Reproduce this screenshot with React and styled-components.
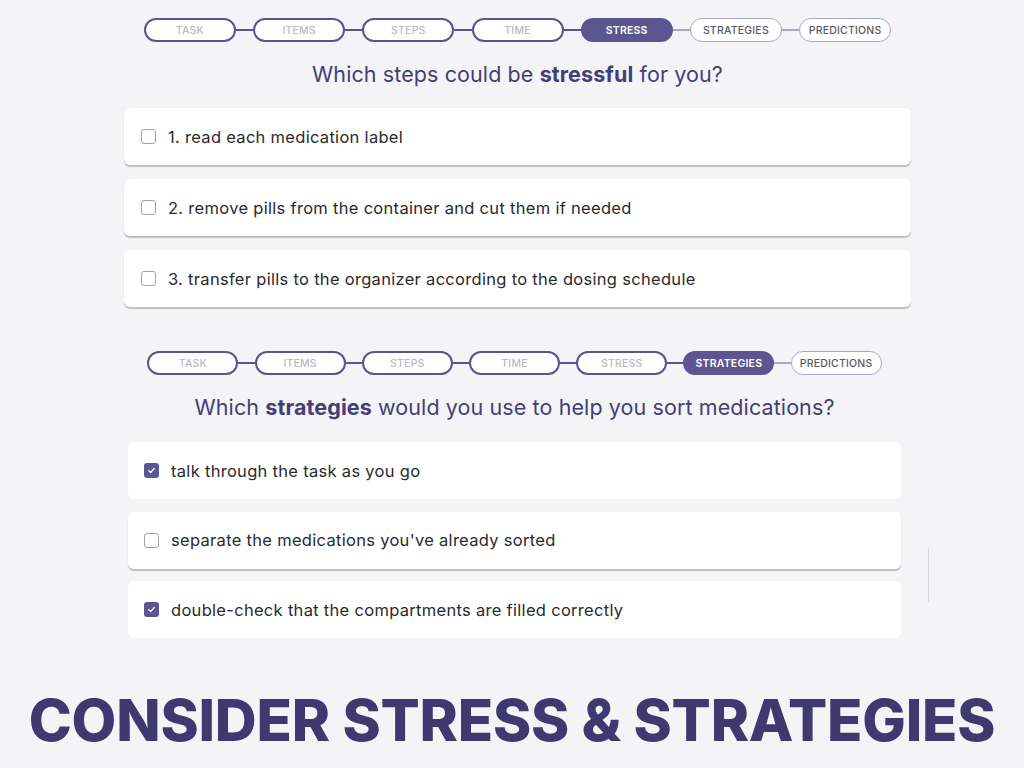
import React from "react";
import styled, { createGlobalStyle } from "styled-components";

const Global = createGlobalStyle`
  html, body { margin: 0; padding: 0; background: #f4f4f7; }
  body { font-family: Inter, "Noto Sans", sans-serif; }
`;

const Page = styled.div`
  position: relative;
  width: 1024px;
  height: 768px;
  background: #f4f4f7;
  overflow: hidden;
  display: flex;
  flex-direction: column;
`;

const Section = styled.section`
  width: ${(p) => p.$width}px;
  margin-left: ${(p) => p.$left}px;
  margin-top: ${(p) => p.$top}px;
  display: flex;
  flex-direction: column;
  align-items: center;
`;

const Stepper = styled.div`
  display: flex;
  align-items: center;
`;

const Pill = styled.div`
  box-sizing: border-box;
  width: ${(p) => p.$w}px;
  height: 24px;
  border-radius: 12px;
  display: flex;
  align-items: center;
  justify-content: center;
  font-size: 10.5px;
  font-weight: ${(p) => (p.$state === "active" ? 600 : 500)};
  letter-spacing: 0.2px;
  text-transform: uppercase;
  border: ${(p) =>
    p.$state === "active"
      ? "2px solid #5c558f"
      : p.$state === "done"
      ? "2px solid #5a5391"
      : "1.5px solid #aba6c9"};
  background: ${(p) => (p.$state === "active" ? "#5c558f" : "#ffffff")};
  color: ${(p) =>
    p.$state === "active" ? "#ffffff" : p.$state === "done" ? "#b9b9c2" : "#58585f"};
`;

const Connector = styled.div`
  width: ${(p) => p.$w}px;
  height: ${(p) => (p.$done ? 2 : 1.5)}px;
  background: ${(p) => (p.$done ? "#5a5391" : "#aba6c9")};
`;

const Heading = styled.h2`
  margin: ${(p) => p.$mt}px 0 0;
  font-size: 21.5px;
  line-height: 30px;
  font-weight: 400;
  letter-spacing: 0.1px;
  color: #443e76;
  strong { font-weight: 700; }
`;

const CardList = styled.div`
  align-self: stretch;
  display: flex;
  flex-direction: column;
  gap: ${(p) => p.$gap}px;
  margin-top: ${(p) => p.$mt}px;
`;

const Card = styled.div`
  height: ${(p) => p.$h}px;
  background: #ffffff;
  border-radius: 6px;
  box-shadow: ${(p) => (p.$shadow ? "0 1.5px 1px rgba(0,0,0,0.22)" : "none")};
  display: flex;
  align-items: center;
  padding-left: ${(p) => p.$pad}px;
  gap: 12px;
`;

const Box = styled.span`
  box-sizing: border-box;
  width: 15px;
  height: 15px;
  border-radius: 3px;
  border: ${(p) => (p.$checked ? "none" : "1.5px solid #a3a3a8")};
  background: ${(p) => (p.$checked ? "#5c558f" : "#ffffff")};
  display: flex;
  align-items: center;
  justify-content: center;
  flex-shrink: 0;
`;

const Label = styled.span`
  font-size: 16.5px;
  color: #2a2a2e;
  letter-spacing: 0.3px;
`;

const Title = styled.h1`
  margin: ${(p) => p.$mt}px 0 0;
  text-align: center;
  white-space: nowrap;
  font-family: Inter, "Noto Sans", sans-serif;
  font-weight: 800;
  font-size: 58px;
  line-height: 60px;
  letter-spacing: -0.2px;
  color: #3f396f;
`;

const Scrollbar = styled.div`
  position: absolute;
  left: 928px;
  top: 548px;
  width: 1px;
  height: 54px;
  background: #d6d6dc;
`;

const steps = ["Task", "Items", "Steps", "Time", "Stress", "Strategies", "Predictions"];

function Steps({ active, pillW, gapW }) {
  const items = [];
  steps.forEach((s, i) => {
    const state = i < active ? "done" : i === active ? "active" : "todo";
    if (i > 0) {
      items.push(<Connector key={"c" + i} $w={gapW} $done={i <= active} />);
    }
    items.push(
      <Pill key={s} $w={pillW} $state={state}>
        {s}
      </Pill>
    );
  });
  return <Stepper>{items}</Stepper>;
}

function Check({ checked }) {
  return (
    <Box $checked={checked}>
      {checked && (
        <svg width="9" height="9" viewBox="0 0 10 10">
          <path d="M2 5.2 L4.1 7.2 L8 2.8" fill="none" stroke="#fff" strokeWidth="1.4" strokeLinecap="round" strokeLinejoin="round" />
        </svg>
      )}
    </Box>
  );
}

const stressItems = [
  "1. read each medication label",
  "2. remove pills from the container and cut them if needed",
  "3. transfer pills to the organizer according to the dosing schedule",
];

const strategyItems = [
  { t: "talk through the task as you go", c: true, s: false },
  { t: "separate the medications you've already sorted", c: false, s: true },
  { t: "double-check that the compartments are filled correctly", c: true, s: false },
];

export default function App() {
  return (
    <Page>
      <Global />
      <Section $width={787} $left={124} $top={18}>
        <Steps active={4} pillW={92} gapW={17.2} />
        <Heading $mt={17}>
          Which steps could be <strong>stressful</strong> for you?
        </Heading>
        <CardList $gap={14} $mt={19}>
          {stressItems.map((t) => (
            <Card key={t} $h={57} $pad={17} $shadow>
              <Check checked={false} />
              <Label>{t}</Label>
            </Card>
          ))}
        </CardList>
      </Section>
      <Section $width={773} $left={128} $top={44}>
        <Steps active={5} pillW={91} gapW={16.2} />
        <Heading $mt={17}>
          Which <strong>strategies</strong> would you use to help you sort medications?
        </Heading>
        <CardList $gap={12.5} $mt={20}>
          {strategyItems.map((it) => (
            <Card key={it.t} $h={57} $pad={16} $shadow={it.s}>
              <Check checked={it.c} />
              <Label>{it.t}</Label>
            </Card>
          ))}
        </CardList>
      </Section>
      <Title $mt={52}>CONSIDER STRESS &amp; STRATEGIES</Title>
      <Scrollbar />
    </Page>
  );
}
